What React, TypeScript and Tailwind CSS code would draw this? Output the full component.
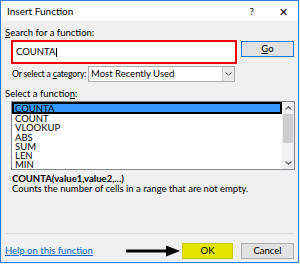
import React from "react";

const font = { fontFamily: 'Lato, "Noto Sans", sans-serif' };

export default function App() {
  const items = ["COUNT", "VLOOKUP", "ABS", "SUM", "LEN", "MIN"];
  return (
    <div className="w-[300px] h-[264px] bg-white text-[9.5px] text-[#000] whitespace-nowrap" style={font}>
      <div className="w-[299px] h-[263px] border border-[#2b7ad8] bg-[#f0f0f0] flex flex-col">
        {/* Title bar */}
        <div className="h-[20px] bg-white flex items-center pl-[6px] pr-[10px]">
          <span className="text-[10px] leading-[10px]">Insert Function</span>
          <span className="ml-auto text-[10px] leading-[10px]">?</span>
          <span className="ml-[25px] text-[11px] leading-[11px] font-light">✕</span>
        </div>
        <div className="flex flex-col pl-[4px] pr-[4px]">
          <div className="mt-[7px] h-[10px] leading-[10px]">
            <span className="underline">S</span>earch for a function:
          </div>
          <div className="mt-[2px] flex items-start">
            <div className="ml-[6px] w-[226px] h-[24px] border-[2px] border-[#ff0000] bg-white flex items-center pl-[3px]">
              <span className="leading-[10px]">COUNTA</span>
              <span className="w-px h-[9px] bg-black ml-px" />
            </div>
            <div className="ml-[4px] mt-[1px] w-[53px] h-[16px] border border-[#0078d7] bg-[#e1e1e1] flex items-center justify-center">
              <span className="leading-[10px]"><span className="underline">G</span>o</span>
            </div>
          </div>
          <div className="mt-[2px] flex items-center h-[16px]">
            <span className="ml-[7px] w-[76px] leading-[10px] text-[8.7px] tracking-[-0.2px]">
              Or select a <span className="underline">c</span>ategory:
            </span>
            <div className="w-[147px] h-[16px] border border-[#acacac] bg-white flex items-center">
              <span className="pl-[2px] leading-[10px]">Most Recently Used</span>
              <div className="ml-auto w-[12px] h-[14px] bg-[#e8e8e8] border-l border-[#d0d0d0] flex items-center justify-center">
                <svg width="7" height="4" viewBox="0 0 7 4"><path d="M0.5 0.5 L3.5 3.2 L6.5 0.5" stroke="#555" fill="none" strokeWidth="1" /></svg>
              </div>
            </div>
          </div>
          <div className="mt-[7px] h-[10px] leading-[10px]">
            Select a functio<span className="underline">n</span>:
          </div>
          <div className="mt-[2px] ml-[6px] w-[284px] h-[69px] border border-[#828790] bg-white flex">
            <div className="flex-1 flex flex-col">
              <div className="h-[12px] bg-[#3399ff] border-[2px] border-black flex items-center pl-[1px]">
                <span className="leading-[9px]">COUNTA</span>
              </div>
              {items.map((it) => (
                <div key={it} className="h-[9.3px] leading-[9.3px] pl-[3px]">
                  {it}
                </div>
              ))}
            </div>
            <div className="w-[12px] bg-[#f0f0f0] flex flex-col items-center">
              <div className="h-[12px] flex items-center justify-center">
                <svg width="7" height="4" viewBox="0 0 7 4"><path d="M0.5 3.5 L3.5 0.8 L6.5 3.5" stroke="#606060" fill="none" strokeWidth="1.2" /></svg>
              </div>
              <div className="w-[10px] h-[29px] bg-[#cdcdcd]" />
              <div className="mt-auto h-[12px] flex items-center justify-center">
                <svg width="7" height="4" viewBox="0 0 7 4"><path d="M0.5 0.5 L3.5 3.2 L6.5 0.5" stroke="#606060" fill="none" strokeWidth="1.2" /></svg>
              </div>
            </div>
          </div>
          <div className="mt-[4px] ml-[7px] h-[10px] leading-[10px] font-bold">COUNTA(value1,value2,...)</div>
          <div className="ml-[7px] h-[10px] leading-[10px]">Counts the number of cells in a range that are not empty.</div>
          <div className="mt-[39px] h-px bg-[#dcdcdc]" />
          <div className="mt-[8px] flex items-center h-[17px]">
            <span className="text-[#0066cc] underline leading-[10px]">Help on this function</span>
            <svg className="ml-auto mr-[1px]" width="55" height="12" viewBox="0 0 55 12">
              <rect x="0" y="4.5" width="42" height="3" fill="#000" />
              <path d="M40 0.5 L54 6 L40 11.5 Z" fill="#000" />
            </svg>
            <div className="w-[51px] h-[16px] border border-[#c8c800] bg-[#e3e600] flex items-center justify-center">
              <span className="leading-[10px]">OK</span>
            </div>
            <div className="ml-[8px] w-[53px] h-[16px] border border-[#adadad] bg-[#e1e1e1] flex items-center justify-center">
              <span className="leading-[10px]">Cancel</span>
            </div>
          </div>
        </div>
      </div>
    </div>
  );
}
